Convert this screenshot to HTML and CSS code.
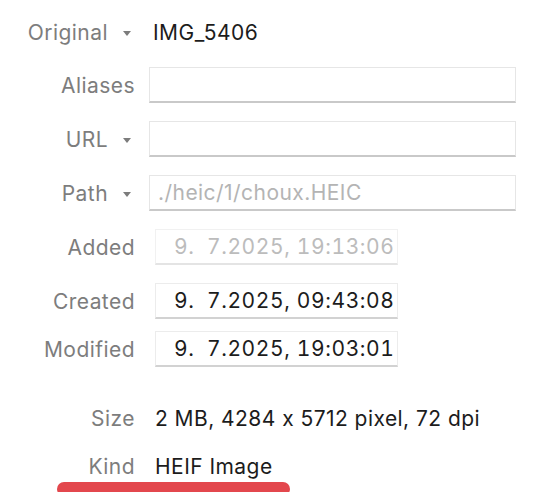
FILE: index.html
```html
<!DOCTYPE html>
<html>
<head>
<meta charset="utf-8">
<link rel="stylesheet" href="styles.css">
</head>
<body>
<div class="inspector">
  <div class="row r-original">
    <div class="label">Original<span class="caret"></span></div>
    <div class="value text">IMG_5406</div>
  </div>
  <div class="row r-aliases">
    <div class="label">Aliases</div>
    <div class="value"><div class="field"></div></div>
  </div>
  <div class="row r-url">
    <div class="label">URL<span class="caret"></span></div>
    <div class="value"><div class="field"></div></div>
  </div>
  <div class="row r-path">
    <div class="label">Path<span class="caret"></span></div>
    <div class="value"><div class="field placeholder">./heic/1/choux.HEIC</div></div>
  </div>
  <div class="row r-added">
    <div class="label">Added</div>
    <div class="value"><div class="date disabled">9.  7.2025, 19:13:06</div></div>
  </div>
  <div class="row r-created">
    <div class="label">Created</div>
    <div class="value"><div class="date">9.  7.2025, 09:43:08</div></div>
  </div>
  <div class="row r-modified">
    <div class="label">Modified</div>
    <div class="value"><div class="date">9.  7.2025, 19:03:01</div></div>
  </div>
  <div class="row r-size">
    <div class="label">Size</div>
    <div class="value text wide">2 MB, 4284 x 5712 pixel, 72 dpi</div>
  </div>
  <div class="row r-kind">
    <div class="label">Kind</div>
    <div class="value text wide">HEIF Image</div>
  </div>
  <div class="mark"></div>
</div>
</body>
</html>
```

FILE: styles.css
```css
html, body {
  margin: 0;
  padding: 0;
  background: #ffffff;
}

body {
  font-family: "Inter", "Liberation Sans", sans-serif;
  font-size: 21px;
  letter-spacing: 0.45px;
  font-feature-settings: "calt" 0;
  color: #1c1c1c;
}

.inspector {
  position: relative;
  width: 538px;
  height: 492px;
  overflow: hidden;
  padding-top: 14px;
  box-sizing: border-box;
}

.row {
  display: grid;
  grid-template-columns: 135px 1fr;
  column-gap: 14px;
  align-items: center;
  height: 36px;
  margin-bottom: 17px;
}

.r-aliases, .r-url, .r-path, .r-added { margin-bottom: 18px; }
.r-created { margin-bottom: 12px; }
.r-modified { margin-bottom: 33px; }
.r-size { margin-bottom: 12px; }

.label {
  display: flex;
  align-items: center;
  justify-content: flex-end;
  color: #7d7d7d;
  white-space: nowrap;
}

.caret {
  width: 0;
  height: 0;
  border-left: 4px solid transparent;
  border-right: 4px solid transparent;
  border-top: 5px solid #7c7c7c;
  margin-left: 15px;
  margin-right: 4px;
  margin-top: 3px;
}

.value {
  min-width: 0;
}

.text {
  padding-left: 4px;
  color: #1c1c1c;
  white-space: nowrap;
}

.text.wide {
  padding-left: 6px;
}

.field {
  box-sizing: border-box;
  width: 367px;
  height: 36px;
  border: 1px solid #e6e6e6;
  border-bottom: 2px solid #c9c9c9;
  padding: 0 8px;
  display: flex;
  align-items: center;
  white-space: nowrap;
}

.placeholder {
  color: #b4b4b4;
}

.date {
  box-sizing: border-box;
  margin-left: 6px;
  width: 243px;
  height: 36px;
  border: 1px solid #ececec;
  border-bottom: 2px solid #d2d2d2;
  padding: 0 6px 0 18px;
  display: flex;
  align-items: center;
  white-space: pre;
  font-variant-numeric: tabular-nums;
  letter-spacing: 0.6px;
  color: #1c1c1c;
}

.date.disabled {
  color: #bcbcbc;
  border-color: #f1f1f1;
  border-bottom-color: #e4e4e4;
}

.mark {
  position: absolute;
  left: 57px;
  top: 482px;
  width: 233px;
  height: 14px;
  border-radius: 7px;
  background: #e3474d;
}
```
